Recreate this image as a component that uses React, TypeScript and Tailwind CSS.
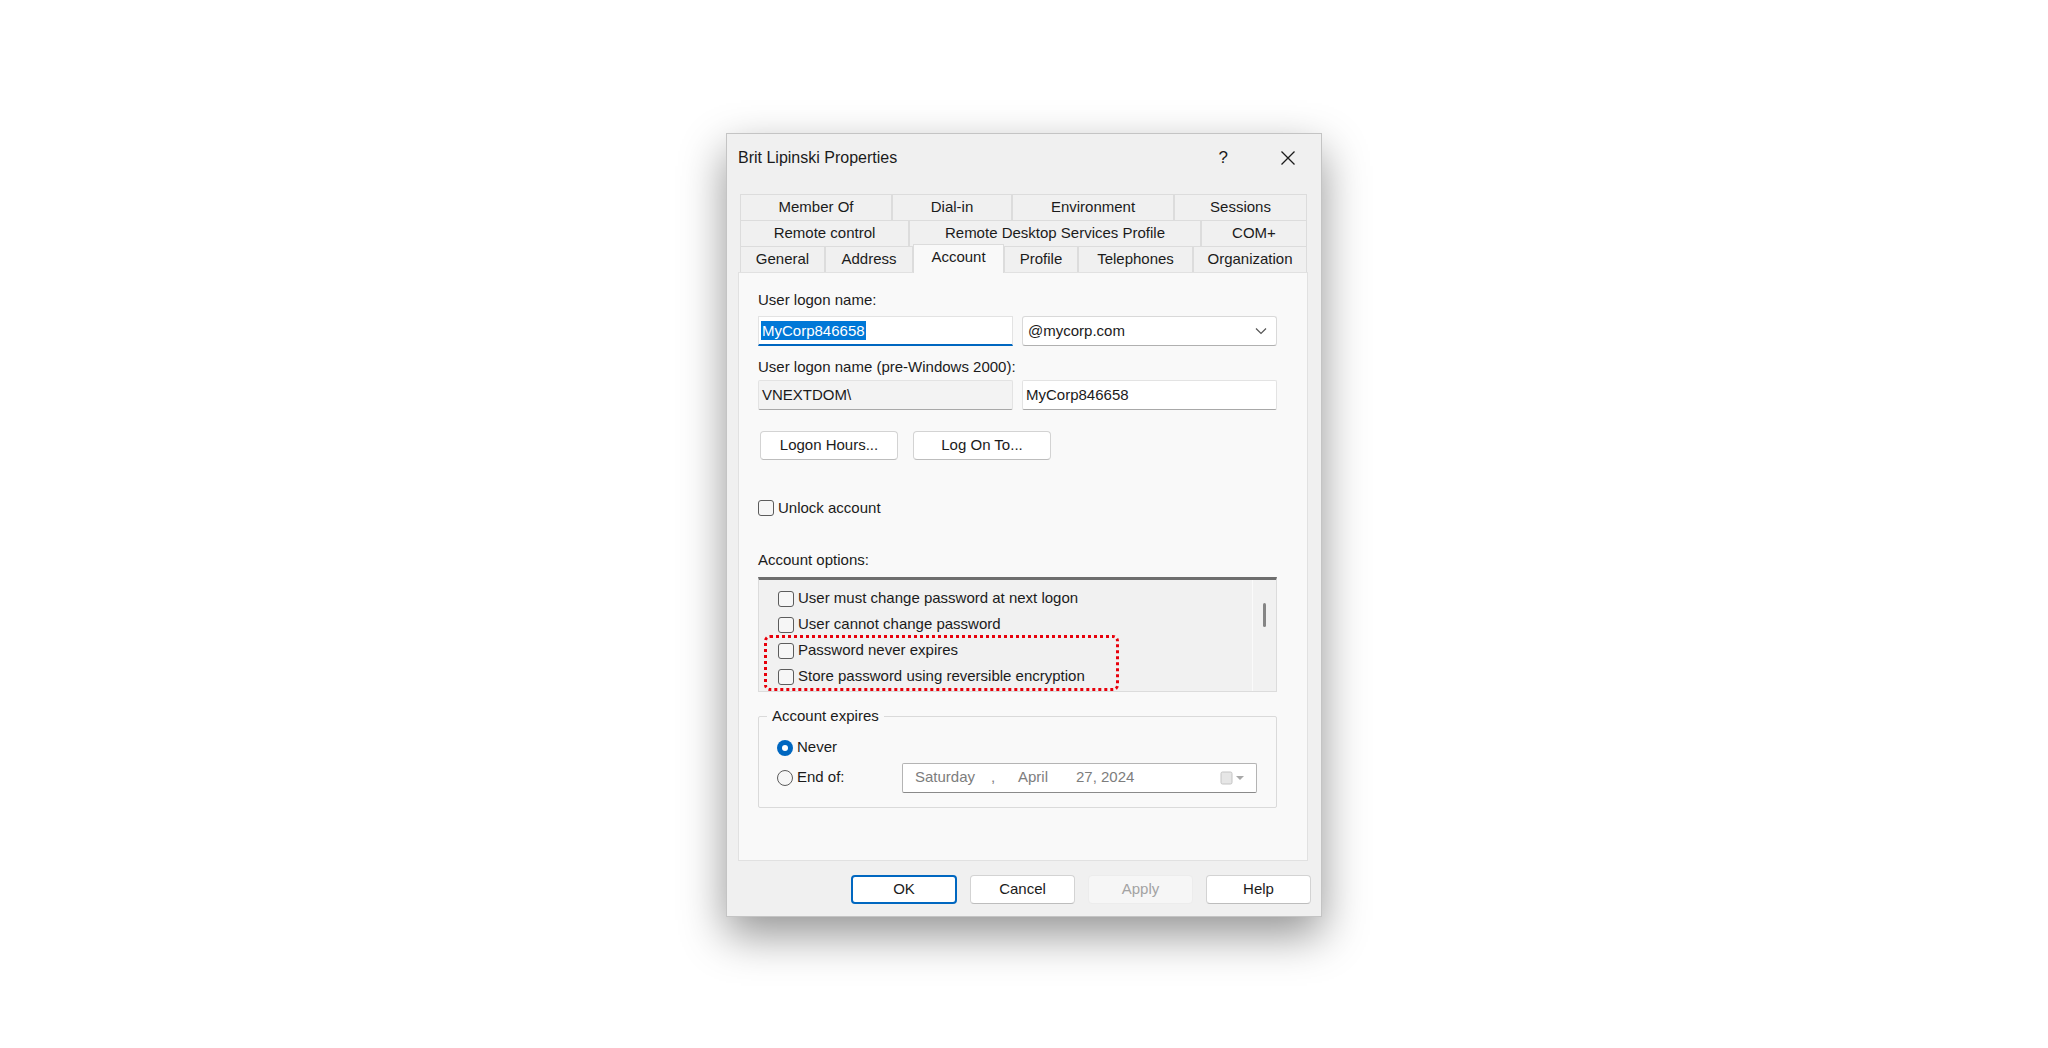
import React from "react";

const font = { fontFamily: '"Liberation Sans", Arial, sans-serif' };

function Tab({ label, w, active }: { label: string; w: string; active?: boolean }) {
  return (
    <div
      className={`${w} flex items-center justify-center border-t border-l border-r border-[#dcdcdc] text-[15px] ${
        active ? "bg-[#f9f9f9] h-[29px] -mt-[3px] pb-[4px] relative z-10 -mb-px" : "bg-[#f0f0f0] h-[26px]"
      }`}
    >
      {label}
    </div>
  );
}

function Checkbox() {
  return <div className="w-[16px] h-[16px] rounded-[3px] border-[1.5px] border-[#5c5c5c] bg-[#f6f6f6] shrink-0" />;
}

function Btn({ label, w, primary, disabled }: { label: string; w: string; primary?: boolean; disabled?: boolean }) {
  return (
    <div
      className={`${w} h-[29px] flex items-center justify-center rounded-[4px] text-[15px] ${
        primary
          ? "border-2 border-[#0067c0] bg-white"
          : disabled
          ? "border border-[#ececec] bg-[#f6f6f6] text-[#a3a3a3]"
          : "border border-[#d3d3d3] border-b-[#bdbdbd] bg-white"
      }`}
    >
      {label}
    </div>
  );
}

export default function App() {
  const options = [
    "User must change password at next logon",
    "User cannot change password",
    "Password never expires",
    "Store password using reversible encryption",
  ];

  return (
    <div className="w-[2048px] h-[1048px] bg-white flex justify-center pt-[133px] text-[#1b1b1b]" style={font}>
      <div className="w-[596px] h-[784px] bg-[#f0f0f0] border border-[#c4c4c4] shadow-[0_18px_42px_rgba(0,0,0,0.42)] flex flex-col">
        {/* title bar */}
        <div className="h-[48px] flex items-center pl-[11px] pr-[22px]">
          <div className="text-[16px] flex-1">Brit Lipinski Properties</div>
          <div className="text-[17px] mr-[52px]">?</div>
          <svg width="16" height="16" viewBox="0 0 16 16" className="mr-[3px]">
            <path d="M1.5 1.5 L14.5 14.5 M14.5 1.5 L1.5 14.5" stroke="#1b1b1b" strokeWidth="1.3" />
          </svg>
        </div>

        {/* tabs */}
        <div className="ml-[13px] w-[567px] mt-[12px] flex flex-col">
          <div className="flex">
            <Tab label="Member Of" w="w-[152px]" />
            <Tab label="Dial-in" w="w-[120px]" />
            <Tab label="Environment" w="w-[162px]" />
            <Tab label="Sessions" w="w-[133px]" />
          </div>
          <div className="flex">
            <Tab label="Remote control" w="w-[169px]" />
            <Tab label="Remote Desktop Services Profile" w="w-[292px]" />
            <Tab label="COM+" w="w-[106px]" />
          </div>
          <div className="flex items-end">
            <Tab label="General" w="w-[85px]" />
            <Tab label="Address" w="w-[88px]" />
            <Tab label="Account" w="w-[91px]" active />
            <Tab label="Profile" w="w-[74px]" />
            <Tab label="Telephones" w="w-[115px]" />
            <Tab label="Organization" w="w-[114px]" />
          </div>
        </div>

        {/* panel */}
        <div className="ml-[11px] w-[570px] h-[589px] bg-[#f9f9f9] border border-[#e1e1e1] pl-[19px] pt-[17px] text-[15px]">
          <div className="leading-[20px]">User logon name:</div>
          <div className="flex gap-[9px] mt-[6px]">
            <div className="w-[255px] h-[30px] bg-white border border-[#e3e3e3] border-b-2 border-b-[#0067c0] flex items-center pl-[2px]">
              <span className="bg-[#0078d7] text-white leading-[19px] px-[1px]">MyCorp846658</span>
            </div>
            <div className="w-[255px] h-[30px] bg-white border border-[#d9d9d9] border-b-[#b0b0b0] rounded-[3px] flex items-center pl-[5px] pr-[8px]">
              <span className="flex-1">@mycorp.com</span>
              <svg width="14" height="14" viewBox="0 0 14 14">
                <path d="M2 4.5 L7 9.5 L12 4.5" stroke="#555" strokeWidth="1.2" fill="none" />
              </svg>
            </div>
          </div>

          <div className="leading-[20px] mt-[11px]">User logon name (pre-Windows 2000):</div>
          <div className="flex gap-[9px] mt-[3px]">
            <div className="w-[255px] h-[30px] bg-[#f3f3f3] border border-[#e3e3e3] border-b-[#a8a8a8] rounded-[2px] flex items-center pl-[3px]">
              VNEXTDOM\
            </div>
            <div className="w-[255px] h-[30px] bg-white border border-[#e3e3e3] border-b-[#a8a8a8] rounded-[2px] flex items-center pl-[3px]">
              MyCorp846658
            </div>
          </div>

          <div className="flex gap-[15px] mt-[21px] ml-[2px]">
            <Btn label="Logon Hours..." w="w-[138px]" />
            <Btn label="Log On To..." w="w-[138px]" />
          </div>

          <div className="flex items-center gap-[4px] mt-[37px]">
            <Checkbox />
            <span>Unlock account</span>
          </div>

          <div className="leading-[20px] mt-[30px]">Account options:</div>
          <div className="relative w-[519px] h-[115px] mt-[7px] bg-[#f1f1f1] border border-[#dcdcdc] border-t-[3px] border-t-[#6e6e6e] flex">
            <div className="flex-1 flex flex-col pt-[6px] pl-[19px]">
              {options.map((o) => (
                <div key={o} className="h-[26px] flex items-center gap-[4px]">
                  <Checkbox />
                  <span>{o}</span>
                </div>
              ))}
            </div>
            <div className="w-[24px] border-l border-[#fafafa] flex justify-center pt-[23px]">
              <div className="w-[3px] h-[24px] rounded-full bg-[#858585]" />
            </div>
            <div className="absolute left-[5px] top-[55px] w-[355px] h-[56px] border-[3px] border-dotted border-[#e8000b] rounded-[6px]" />
          </div>

          <div className="relative w-[519px] h-[92px] mt-[24px] border border-[#dadada] rounded-[2px] pl-[18px] pt-[20px]">
            <div className="absolute -top-[11px] left-[8px] px-[5px] bg-[#f9f9f9] leading-[20px]">Account expires</div>
            <div className="flex items-center gap-[4px] h-[22px]">
              <div className="w-[16px] h-[16px] rounded-full bg-[#0067c0] flex items-center justify-center">
                <div className="w-[6px] h-[6px] rounded-full bg-white" />
              </div>
              <span>Never</span>
            </div>
            <div className="flex items-center mt-[8px] h-[22px]">
              <div className="w-[16px] h-[16px] rounded-full border-[1.5px] border-[#5c5c5c] bg-[#f6f6f6]" />
              <span className="ml-[4px] w-[105px]">End of:</span>
              <div className="w-[355px] h-[30px] bg-white border border-[#b4b4b4] border-b-[#8a8a8a] rounded-[2px] flex items-center text-[#7d7d7d] pl-[12px] pr-[10px]">
                <span className="w-[76px]">Saturday</span>
                <span className="w-[27px]">,</span>
                <span className="w-[58px]">April</span>
                <span className="flex-1">27, 2024</span>
                <svg width="26" height="14" viewBox="0 0 26 14">
                  <rect x="1" y="1" width="11" height="12" rx="1.5" fill="#e6e6e6" stroke="#c4c4c4" />
                  <path d="M16 5 L24 5 L20 9 Z" fill="#a8a8a8" />
                </svg>
              </div>
            </div>
          </div>
        </div>

        {/* footer */}
        <div className="flex justify-end gap-[13px] pr-[10px] mt-[14px] text-[15px]">
          <Btn label="OK" w="w-[106px]" primary />
          <Btn label="Cancel" w="w-[105px]" />
          <Btn label="Apply" w="w-[105px]" disabled />
          <Btn label="Help" w="w-[105px]" />
        </div>
      </div>
    </div>
  );
}
